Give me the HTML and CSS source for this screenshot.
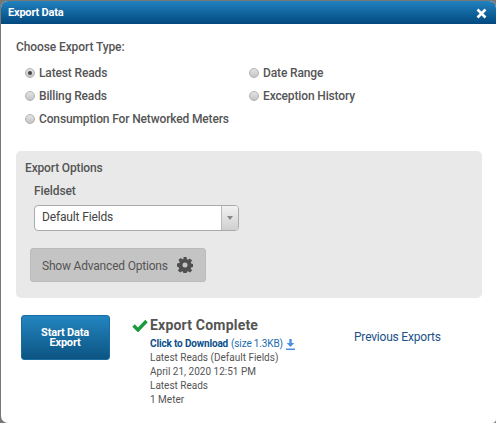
FILE: index.html
```html
<!DOCTYPE html>
<html lang="en">
<head>
    <meta charset="UTF-8">
    <title>Export Data</title>
    <link rel="stylesheet" href="styles.css">
</head>
<body>
    <div class="dialog">
        <div class="dialog-header">
            <span class="dialog-title">Export Data</span>
            <svg class="close-icon" width="11" height="11" viewBox="0 0 11 11">
                <path d="M1.5 1.5L9.5 9.5M9.5 1.5L1.5 9.5" stroke="#fff" stroke-width="2.6" fill="none"/>
            </svg>
        </div>
        <div class="dialog-body">
            <h2 class="type-title">Choose Export Type:</h2>
            <div class="type-grid">
                <div class="type-col">
                    <label class="radio-row"><span class="radio checked"></span>Latest Reads</label>
                    <label class="radio-row"><span class="radio"></span>Billing Reads</label>
                    <label class="radio-row"><span class="radio"></span>Consumption For Networked Meters</label>
                </div>
                <div class="type-col">
                    <label class="radio-row"><span class="radio"></span>Date Range</label>
                    <label class="radio-row"><span class="radio"></span>Exception History</label>
                </div>
            </div>
            <div class="options">
                <h3 class="options-title">Export Options</h3>
                <div class="fieldset-label">Fieldset</div>
                <div class="select">
                    <span class="select-value">Default Fields</span>
                    <span class="select-arrow"></span>
                </div>
                <button class="advanced-btn">
                    <span>Show Advanced Options</span>
                    <svg class="gear" width="16" height="16" viewBox="0 0 16 16">
                        <path fill="#4f4f4f" fill-rule="evenodd" d="M6.500 0h3l.4 2.300 1.100.5 1.900-1.400 2.200 2.200-1.400 1.900.5 1.100 2.300.4v3l-2.300.4-.5 1.100 1.400 1.900-2.200 2.200-1.900-1.400-1.100.5-.4 2.300h-3l-.4-2.300-1.100-.5-1.900 1.400-2.200-2.200 1.400-1.900-.5-1.100L0 9.500v-3l2.300-.4.5-1.100-1.400-1.900 2.200-2.200 1.900 1.400 1.100-.5zM8 5.500a2.500 2.500 0 1 0 0 5 2.500 2.500 0 0 0 0-5z"/>
                    </svg>
                </button>
            </div>
            <div class="result-row">
                <button class="start-btn">Start Data Export</button>
                <div class="result">
                    <div class="result-head">
                        <svg width="16" height="13" viewBox="0 0 16 13">
                            <path d="M1.500 6.500L6 11L14.500 2" stroke="#1a9a3c" stroke-width="3.400" fill="none"/>
                        </svg>
                        <span class="result-title">Export Complete</span>
                    </div>
                    <div class="result-lines">
                        <div class="download">
                            <a class="download-link">Click to Download</a>
                            <span class="download-size">(size 1.3KB)</span>
                            <svg width="9" height="11" viewBox="0 0 9 11">
                                <path fill="#4a90e2" d="M3.300 0h2.400v4H8.300L4.500 8 .7 4h2.600zM0 9.400h9V11H0z"/>
                            </svg>
                        </div>
                        <div>Latest Reads (Default Fields)</div>
                        <div>April 21, 2020 12:51 PM</div>
                        <div>Latest Reads</div>
                        <div>1 Meter</div>
                    </div>
                </div>
                <a class="previous-link">Previous Exports</a>
            </div>
        </div>
    </div>
</body>
</html>
```

FILE: styles.css
```css
* {
    margin: 0;
    padding: 0;
    box-sizing: border-box;
}
body {
    width: 496px;
    height: 423px;
    overflow: hidden;
    padding: 1px 0 0 1px;
    background: #777;
    font-family: Roboto, Arial, sans-serif;
    color: #555;
}
.dialog {
    height: 422px;
    background: #fff;
    border-radius: 7px 7px 4px 7px;
    overflow: hidden;
}
.dialog-header {
    height: 23px;
    display: flex;
    align-items: center;
    justify-content: space-between;
    padding: 0 4px 0 7px;
    background: linear-gradient(#2182bf, #02497f);
}
.dialog-title {
    color: #fff;
    font-size: 11px;
    font-weight: 700;
    letter-spacing: -0.2px;
}
.close-icon {
    margin: 2px 5px 0 0;
}
.dialog-body {
    padding: 16px 14px 0 15px;
}
.type-title {
    font-size: 12px;
    font-weight: 500;
    line-height: 14px;
    letter-spacing: -0.1px;
    color: #555;
}
.type-grid {
    display: flex;
    margin-top: 7px;
    padding-left: 9px;
}
.type-col {
    width: 224px;
    display: flex;
    flex-direction: column;
}
.radio-row {
    height: 23px;
    display: flex;
    align-items: center;
    gap: 4px;
    font-size: 12px;
    font-weight: 500;
    letter-spacing: -0.14px;
    white-space: nowrap;
}
.radio {
    width: 10px;
    height: 10px;
    border-radius: 50%;
    border: 1px solid #b0b0b0;
    background: linear-gradient(#e4e4e4, #c4c4c4);
    display: flex;
    align-items: center;
    justify-content: center;
}
.radio.checked::after {
    content: "";
    width: 4px;
    height: 4px;
    border-radius: 50%;
    background: #444;
}
.options {
    margin-top: 21px;
    height: 147px;
    padding: 10px 9px;
    border-radius: 5px;
    background: #e9e9e9;
}
.options-title {
    font-size: 12px;
    font-weight: 500;
    line-height: 14px;
    letter-spacing: -0.15px;
}
.fieldset-label {
    margin: 9px 0 0 9px;
    font-size: 12px;
    font-weight: 500;
    line-height: 14px;
    letter-spacing: -0.1px;
}
.select {
    width: 205px;
    height: 26px;
    margin: 7px 0 0 9px;
    display: flex;
    background: #fff;
    border: 1px solid #aaa;
    border-radius: 4px;
    overflow: hidden;
}
.select-value {
    flex: 1;
    padding-left: 7px;
    font-size: 12px;
    line-height: 23px;
    letter-spacing: -0.15px;
    color: #444;
}
.select-arrow {
    width: 17px;
    border-left: 1px solid #bbb;
    background: linear-gradient(#f2f2f2, #cfcfcf);
    display: flex;
    align-items: center;
    justify-content: center;
}
.select-arrow::after {
    content: "";
    border-left: 3px solid transparent;
    border-right: 3px solid transparent;
    border-top: 4px solid #888;
}
.advanced-btn {
    width: 176px;
    height: 34px;
    margin: 17px 0 0 5px;
    display: flex;
    align-items: center;
    gap: 9px;
    padding: 2px 0 0 11px;
    background: #c4c4c4;
    border: 1px solid #bbb;
    border-radius: 3px;
    font-family: inherit;
    font-size: 12px;
    letter-spacing: -0.2px;
    color: #555;
}
.gear {
    margin-top: -2px;
}
.result-row {
    display: flex;
    align-items: flex-start;
    margin-top: 17px;
    padding-left: 5px;
}
.start-btn {
    width: 89px;
    height: 45px;
    padding: 1px 13px 0 12px;
    background: linear-gradient(#2385c0, #0c5482);
    border: 1px solid #1a6da3;
    border-radius: 3px;
    color: #fff;
    font-family: inherit;
    font-size: 11px;
    font-weight: 700;
    line-height: 10px;
    letter-spacing: -0.2px;
}
.result {
    width: 222px;
    margin: 1px 0 0 22px;
}
.result-head {
    display: flex;
    align-items: center;
    gap: 2px;
    height: 18px;
}
.result-title {
    font-size: 14px;
    font-weight: 700;
    letter-spacing: 0.2px;
}
.result-lines {
    margin: 3px 0 0 18px;
    font-size: 10px;
    line-height: 14px;
}
.download {
    display: flex;
    align-items: center;
    gap: 3px;
    letter-spacing: -0.15px;
}
.download-link {
    color: #0b4f8a;
    font-weight: 700;
}
.download-size {
    color: #1a6bb0;
}
.previous-link {
    margin-top: 15px;
    font-size: 12px;
    line-height: 14px;
    letter-spacing: -0.2px;
    color: #1a5288;
}
```
